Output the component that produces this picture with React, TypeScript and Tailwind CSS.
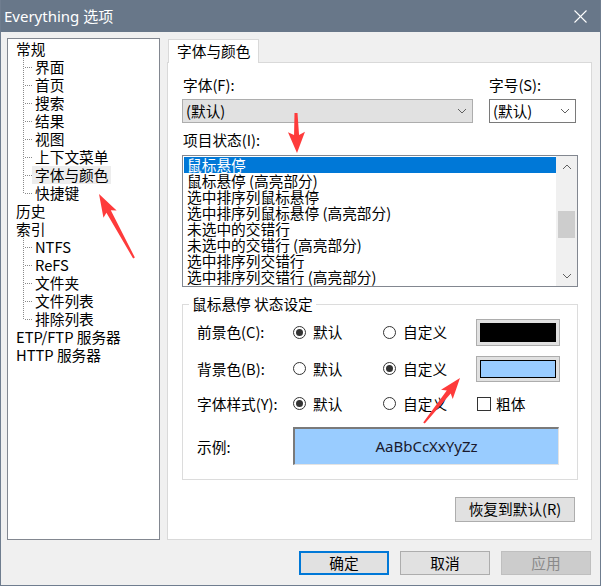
import React from 'react';

// tree of option pages (left panel)
const tree: { label: string; children?: string[] }[] = [
  { label: '常规', children: ['界面', '首页', '搜索', '结果', '视图', '上下文菜单', '字体与颜色', '快捷键'] },
  { label: '历史' },
  { label: '索引', children: ['NTFS', 'ReFS', '文件夹', '文件列表', '排除列表'] },
  { label: 'ETP/FTP 服务器' },
  { label: 'HTTP 服务器' },
];

const states = [
  '鼠标悬停',
  '鼠标悬停 (高亮部分)',
  '选中排序列鼠标悬停',
  '选中排序列鼠标悬停 (高亮部分)',
  '未选中的交错行',
  '未选中的交错行 (高亮部分)',
  '选中排序列交错行',
  '选中排序列交错行 (高亮部分)',
  '选中的交错行',
];

function Connector({ last }: { last: boolean }) {
  return (
    <svg width="9" height="18" className="shrink-0">
      <line x1="0.5" y1="0" x2="0.5" y2={last ? 10 : 18} stroke="#8a8a8a" strokeDasharray="1 1" />
      <line x1="2" y1="9.5" x2="9" y2="9.5" stroke="#8a8a8a" strokeDasharray="1 1" />
    </svg>
  );
}

function Chevron({ up = false }: { up?: boolean }) {
  return (
    <svg width="10" height="6" viewBox="0 0 10 6" className="shrink-0">
      <polyline
        points={up ? '1,5 5,1 9,5' : '1,1 5,5 9,1'}
        fill="none"
        stroke="#606060"
        strokeWidth="1"
      />
    </svg>
  );
}

function Radio({ checked, label }: { checked?: boolean; label: string }) {
  return (
    <div className="flex items-center gap-[7px]">
      <span className="flex h-[13px] w-[13px] items-center justify-center rounded-full border border-[#333333] bg-white">
        {checked && <span className="h-[7px] w-[7px] rounded-full bg-[#333333]" />}
      </span>
      <span>{label}</span>
    </div>
  );
}

function Arrow({ x1, y1, x2, y2, w0, w1, head, hw }: { x1: number; y1: number; x2: number; y2: number; w0: number; w1: number; head: number; hw: number }) {
  const dx = x2 - x1;
  const dy = y2 - y1;
  const len = Math.sqrt(dx * dx + dy * dy);
  const ux = dx / len;
  const uy = dy / len;
  const nx = -uy;
  const ny = ux;
  const bx = x2 - ux * head;
  const by = y2 - uy * head;
  const cx = bx - ux * 3;
  const cy = by - uy * 3;
  const pts = [
    [x1 + (nx * w0) / 2, y1 + (ny * w0) / 2],
    [bx + (nx * w1) / 2, by + (ny * w1) / 2],
    [cx + (nx * hw) / 2, cy + (ny * hw) / 2],
    [x2, y2],
    [cx - (nx * hw) / 2, cy - (ny * hw) / 2],
    [bx - (nx * w1) / 2, by - (ny * w1) / 2],
    [x1 - (nx * w0) / 2, y1 - (ny * w0) / 2],
  ];
  return <polygon points={pts.map((p) => p.join(',')).join(' ')} fill="#fe3b3b" />;
}

export default function App() {
  return (
    <div className="relative flex h-[586px] w-[601px] flex-col border-x border-b border-[#6f7d8f] bg-[#f0f0f0] font-['Noto_Sans_CJK_SC','Noto_Sans',sans-serif] text-[14.7px] text-black">
      {/* Title bar */}
      <div className="flex h-[32px] shrink-0 items-center justify-between bg-[#687789] pl-[3px] pr-[13px] text-white">
        <span className="font-['Noto_Sans','Noto_Sans_CJK_SC',sans-serif] text-[15px] leading-[32px]">Everything 选项</span>
        <svg width="13" height="13" viewBox="0 0 13 13">
          <line x1="0.5" y1="0.5" x2="12.5" y2="12.5" stroke="white" strokeWidth="1.1" />
          <line x1="12.5" y1="0.5" x2="0.5" y2="12.5" stroke="white" strokeWidth="1.1" />
        </svg>
      </div>

      {/* Body */}
      <div className="flex gap-[7px] pl-[6px] pt-[6px]">
        {/* Tree */}
        <div className="h-[502px] w-[153px] shrink-0 border border-[#828790] bg-white pl-[8px] pt-[1px]">
          {tree.map((node) => (
            <div key={node.label}>
              <div className="h-[18px] leading-[18px]">{node.label}</div>
              {node.children?.map((c, i) => (
                <div key={c} className="flex h-[18px] items-center pl-[7px] leading-[18px]">
                  <Connector last={i === node.children!.length - 1} />
                  <span className={`px-[3px] ${c === '字体与颜色' ? 'bg-[#ededed]' : ''}`}>{c}</span>
                </div>
              ))}
            </div>
          ))}
        </div>

        {/* Tab area */}
        <div className="flex w-[425px] flex-col pt-[1px]">
          <div className="flex">
            <div className="relative z-10 -mb-px ml-[1px] h-[24px] w-[91px] border border-b-0 border-[#d9d9d9] bg-white pl-[8px] leading-[22px]">
              字体与颜色
            </div>
          </div>
          <div className="flex h-[478px] flex-col border border-[#d9d9d9] bg-white pl-[14px] pr-[13px] pt-[14px]">
            {/* font row */}
            <div className="flex gap-[16px]">
              <div className="flex w-[291px] flex-col">
                <span className="pl-[1px] leading-[16px]">字体(F):</span>
                <div className="mt-[6px] flex h-[24px] items-center justify-between border border-[#adadad] bg-[#e1e1e1] pl-[3px] pr-[5px] leading-[22px]">
                  <span>(默认)</span>
                  <Chevron />
                </div>
              </div>
              <div className="flex w-[87px] flex-col">
                <span className="leading-[16px]">字号(S):</span>
                <div className="mt-[6px] flex h-[24px] items-center justify-between border border-[#7a7a7a] bg-white pl-[3px] pr-[5px] leading-[22px]">
                  <span>(默认)</span>
                  <Chevron />
                </div>
              </div>
            </div>

            <span className="mt-[9px] pl-[1px] leading-[16px]">项目状态(I):</span>

            {/* list box */}
            <div className="mt-[7px] flex h-[132px] border border-[#828790] bg-white">
              <div className="flex-1 overflow-hidden pl-[1px] pt-[1px]">
                {states.map((s, i) => (
                  <div
                    key={s}
                    className={`h-[16px] whitespace-nowrap pl-[3px] leading-[16px] ${i === 0 ? 'bg-[#0078d7] text-white' : ''}`}
                  >
                    {s}
                  </div>
                ))}
              </div>
              <div className="flex w-[21px] shrink-0 flex-col bg-[#f0f0f0]">
                <div className="flex h-[21px] items-center justify-center">
                  <Chevron up />
                </div>
                <div className="flex-1 px-[2px]">
                  <div className="mt-[34px] h-[27px] bg-[#cdcdcd]" />
                </div>
                <div className="flex h-[21px] items-center justify-center">
                  <Chevron />
                </div>
              </div>
            </div>

            {/* state settings group */}
            <fieldset className="mt-[7px] border border-[#dcdcdc]">
              <legend className="ml-[6px] px-[3px] leading-[20px]">鼠标悬停 状态设定</legend>
              <div className="grid grid-cols-[96px_90px_93px_84px] px-[14px] pb-[14px] pt-[5px]">
                <div className="flex h-[27px] items-center">前景色(C):</div>
                <div className="flex items-center">
                  <Radio checked label="默认" />
                </div>
                <div className="flex items-center">
                  <Radio label="自定义" />
                </div>
                <div className="h-[27px] border border-[#adadad] bg-[#e1e1e1] p-[3px]">
                  <div className="h-full bg-black" />
                </div>

                <div className="mt-[10px] flex h-[26px] items-center">背景色(B):</div>
                <div className="mt-[10px] flex items-center">
                  <Radio label="默认" />
                </div>
                <div className="mt-[10px] flex items-center">
                  <Radio checked label="自定义" />
                </div>
                <div className="mt-[10px] h-[26px] border border-[#adadad] bg-[#e1e1e1] p-[3px]">
                  <div className="h-full border border-black bg-[#99ccff]" />
                </div>

                <div className="mt-[9px] flex h-[26px] items-center">字体样式(Y):</div>
                <div className="mt-[9px] flex items-center">
                  <Radio checked label="默认" />
                </div>
                <div className="mt-[9px] flex items-center">
                  <Radio label="自定义" />
                </div>
                <div className="mt-[9px] flex items-center gap-[5px] pl-[1px]">
                  <span className="h-[14px] w-[14px] border border-[#333333] bg-white" />
                  <span>粗体</span>
                </div>

                <div className="mt-[10px] flex h-[38px] items-center pt-[3px]">示例:</div>
                <div className="col-span-3 mt-[10px] mr-[1px] flex h-[38px] items-center justify-center border-b border-l-2 border-r border-t-2 border-b-[#e3e3e3] border-l-[#7a7a7a] border-r-[#e3e3e3] border-t-[#7a7a7a] bg-[#99ccff] font-['Noto_Sans',sans-serif] text-[15px] text-[#1a1a2e]">
                  AaBbCcXxYyZz
                </div>
              </div>
            </fieldset>

            <div className="mt-[17px] mr-[3px] flex h-[25px] w-[120px] items-center justify-center self-end border border-[#adadad] bg-[#e1e1e1]">
              恢复到默认(R)
            </div>
          </div>
        </div>
      </div>

      {/* dialog buttons */}
      <div className="mt-[11px] flex justify-end gap-[11px] pr-[9px]">
        <div className="flex h-[24px] w-[90px] items-center justify-center border-2 border-[#0078d7] bg-[#e1e1e1]">确定</div>
        <div className="flex h-[24px] w-[90px] items-center justify-center border border-[#adadad] bg-[#e1e1e1]">取消</div>
        <div className="flex h-[24px] w-[90px] items-center justify-center border border-[#bfbfbf] bg-[#cccccc] text-[#8a8a8a]">应用</div>
      </div>

      {/* red annotation arrows */}
      <svg className="pointer-events-none absolute left-[-1px] top-0" width="602" height="586">
        <Arrow x1={134} y1={258} x2={99} y2={194} w0={2} w1={5} head={20} hw={15} />
        <Arrow x1={296} y1={113} x2={297} y2={153} w0={3} w1={5} head={18} hw={17} />
        <Arrow x1={424} y1={423} x2={460} y2={378} w0={2} w1={5} head={18} hw={15} />
      </svg>
    </div>
  );
}
